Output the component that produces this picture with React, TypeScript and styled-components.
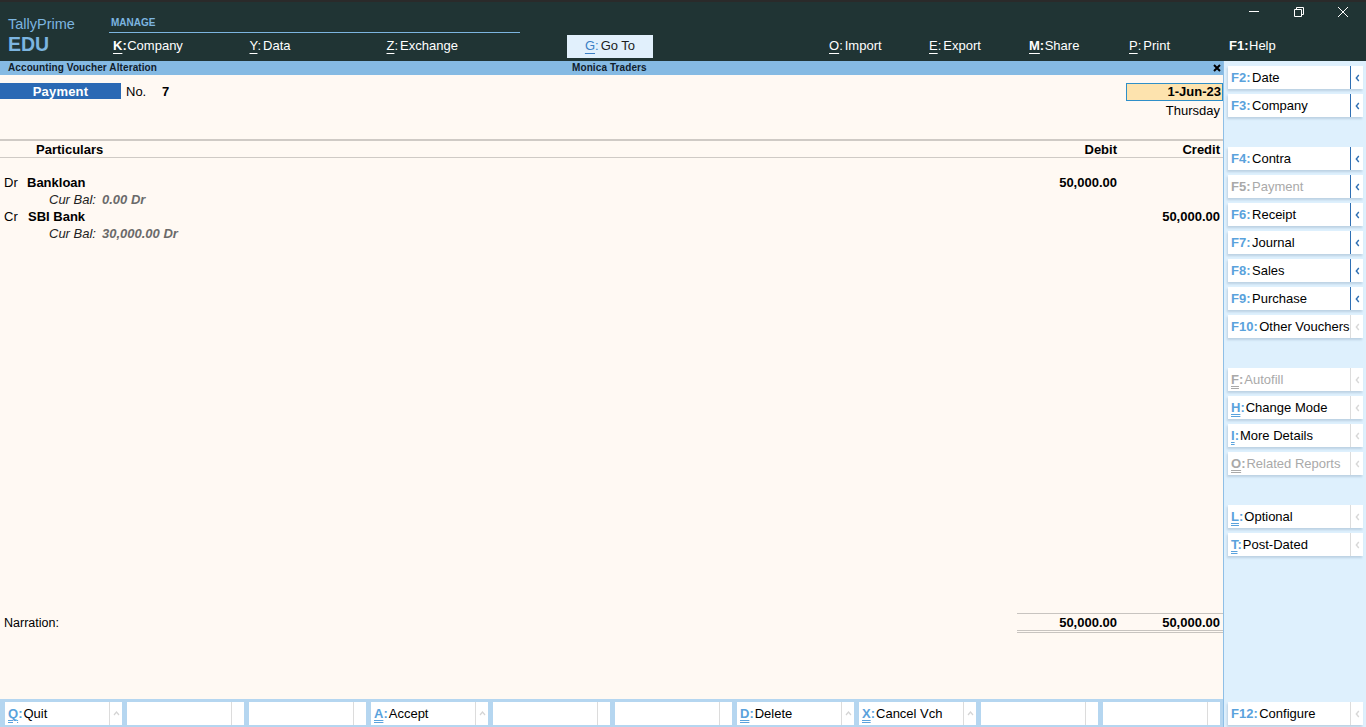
import React from 'react'
import styled, { createGlobalStyle } from 'styled-components'

const GlobalStyle = createGlobalStyle`
  html, body {
    margin: 0;
    padding: 0;
    height: 100%;
    overflow: hidden;
  }
  body {
    font-family: "Liberation Sans", Arial, sans-serif;
    font-size: 13px;
    color: #000;
  }
  #root {
    height: 100%;
  }
`

const topMenu = [
  { k: 'K', label: 'Company', width: 136.5, bold: true },
  { k: 'Y', label: 'Data', width: 137 },
  { k: 'Z', label: 'Exchange', width: 181 },
]

const rightMenu = [
  { k: 'O', label: 'Import' },
  { k: 'E', label: 'Export' },
  { k: 'M', label: 'Share', bold: true },
  { k: 'P', label: 'Print' },
]

type SideItem = { k: string; label: string; fn?: boolean; disabled?: boolean; active?: boolean }

const sideGroups: SideItem[][] = [
  [
    { k: 'F2', label: 'Date', fn: true, active: true },
    { k: 'F3', label: 'Company', fn: true, active: true },
  ],
  [
    { k: 'F4', label: 'Contra', fn: true, active: true },
    { k: 'F5', label: 'Payment', fn: true, active: true, disabled: true },
    { k: 'F6', label: 'Receipt', fn: true, active: true },
    { k: 'F7', label: 'Journal', fn: true, active: true },
    { k: 'F8', label: 'Sales', fn: true, active: true },
    { k: 'F9', label: 'Purchase', fn: true, active: true },
    { k: 'F10', label: 'Other Vouchers', fn: true },
  ],
  [
    { k: 'F', label: 'Autofill', disabled: true },
    { k: 'H', label: 'Change Mode' },
    { k: 'I', label: 'More Details' },
    { k: 'O', label: 'Related Reports', disabled: true },
  ],
  [
    { k: 'L', label: 'Optional' },
    { k: 'T', label: 'Post-Dated' },
  ],
]

const bottomItems = [
  { k: 'Q', label: 'Quit' },
  {},
  {},
  { k: 'A', label: 'Accept' },
  {},
  {},
  { k: 'D', label: 'Delete' },
  { k: 'X', label: 'Cancel Vch' },
  {},
  {},
]

const App: React.FC = () => {
  return (
    <Page>
      <GlobalStyle />
      <Header>
        <Brand>
          <BrandName>TallyPrime</BrandName>
          <BrandEdition>EDU</BrandEdition>
        </Brand>
        <ManageBlock>
          <ManageLabel>MANAGE</ManageLabel>
          <ManageMenu>
            {topMenu.map((m) => (
              <MenuItem key={m.k} $width={m.width}>
                <MenuKey $bold={m.bold}>{m.k}</MenuKey>
                <MenuColon $bold={m.bold}>:</MenuColon>
                {m.label}
              </MenuItem>
            ))}
          </ManageMenu>
        </ManageBlock>
        <GoTo>
          <GoToKey>G</GoToKey>
          <GoToColon>:</GoToColon>Go To
        </GoTo>
        <RightMenu>
          {rightMenu.map((m) => (
            <RightItem key={m.k}>
              <MenuKey $bold={m.bold}>{m.k}</MenuKey>
              <MenuColon $bold={m.bold}>:</MenuColon>
              {m.label}
            </RightItem>
          ))}
          <RightItem>
            <MenuColon $bold>F1:</MenuColon>Help
          </RightItem>
        </RightMenu>
        <WindowControls>
          <svg width="12" height="12" viewBox="0 0 12 12">
            <path d="M1 5.5h10" stroke="#fff" strokeWidth="1" fill="none" />
          </svg>
          <svg width="12" height="12" viewBox="0 0 12 12">
            <path d="M1.5 3.5h7v7h-7zM3.5 3.5v-2h7v7h-2" stroke="#fff" strokeWidth="1" fill="none" />
          </svg>
          <svg width="12" height="12" viewBox="0 0 12 12">
            <path d="M1 1l10 10M11 1L1 11" stroke="#fff" strokeWidth="1" fill="none" />
          </svg>
        </WindowControls>
      </Header>
      <Body>
        <Work>
          <TitleBar>
            <div>Accounting Voucher Alteration</div>
            <div>Monica Traders</div>
            <TitleClose>
              <svg width="8" height="8" viewBox="0 0 8 8">
                <path d="M1 1l6 6M7 1L1 7" stroke="#000" strokeWidth="2" fill="none" />
              </svg>
            </TitleClose>
          </TitleBar>
          <Voucher>
            <VoucherHead>
              <VoucherType>Payment</VoucherType>
              <VoucherNoLabel>No.</VoucherNoLabel>
              <VoucherNo>7</VoucherNo>
              <DateBlock>
                <DateBox>1-Jun-23</DateBox>
                <DayName>Thursday</DayName>
              </DateBlock>
            </VoucherHead>
            <ColumnHead>
              <ParticularsHead>Particulars</ParticularsHead>
              <AmountHead>Debit</AmountHead>
              <AmountHead>Credit</AmountHead>
            </ColumnHead>
            <Entries>
              <EntryRow>
                <EntryName>
                  <DrCr>Dr</DrCr>
                  <Ledger>Bankloan</Ledger>
                </EntryName>
                <Amount>50,000.00</Amount>
                <Amount />
              </EntryRow>
              <BalanceRow>
                <BalanceLabel>Cur Bal:</BalanceLabel>
                <BalanceValue>0.00 Dr</BalanceValue>
              </BalanceRow>
              <EntryRow>
                <EntryName>
                  <DrCr>Cr</DrCr>
                  <Ledger $shift>SBI Bank</Ledger>
                </EntryName>
                <Amount />
                <Amount>50,000.00</Amount>
              </EntryRow>
              <BalanceRow>
                <BalanceLabel>Cur Bal:</BalanceLabel>
                <BalanceValue>30,000.00 Dr</BalanceValue>
              </BalanceRow>
            </Entries>
            <TotalsRow>
              <Narration>Narration:</Narration>
              <Totals>
                <Amount>50,000.00</Amount>
                <Amount>50,000.00</Amount>
              </Totals>
            </TotalsRow>
          </Voucher>
          <BottomBar>
            {bottomItems.map((b, i) => (
              <BottomButton key={i}>
                <BottomLabel>
                  {b.k && (
                    <>
                      <HotKey>{b.k}</HotKey>
                      <HotColon>:</HotColon>
                      {b.label}
                    </>
                  )}
                </BottomLabel>
                <BottomArrow>
                  {b.k && (
                    <svg width="7" height="5" viewBox="0 0 7 5">
                      <path d="M1 4l2.5-3L6 4" stroke="#d4d4d4" strokeWidth="1.2" fill="none" />
                    </svg>
                  )}
                </BottomArrow>
              </BottomButton>
            ))}
          </BottomBar>
        </Work>
        <Side>
          <SideTop>
            {sideGroups.map((group, i) => (
              <SideGroup key={i}>
                {group.map((item) => (
                  <SideButton key={item.k + item.label} $disabled={item.disabled}>
                    <SideLabel>
                      {item.fn ? (
                        <FnKey $disabled={item.disabled}>{item.k}:</FnKey>
                      ) : (
                        <>
                          <HotKey $disabled={item.disabled}>{item.k}</HotKey>
                          <HotColon $disabled={item.disabled}>:</HotColon>
                        </>
                      )}
                      {item.label}
                    </SideLabel>
                    <SideArrow $active={item.active}>
                      <svg width="5" height="8" viewBox="0 0 5 8">
                        <path
                          d="M3.8 1L1.3 4l2.5 3"
                          stroke={item.active ? '#2f6fb3' : '#d8d8d8'}
                          strokeWidth="1.4"
                          fill="none"
                        />
                      </svg>
                    </SideArrow>
                  </SideButton>
                ))}
              </SideGroup>
            ))}
          </SideTop>
          <SideButton>
            <SideLabel>
              <FnKey>F12:</FnKey>Configure
            </SideLabel>
            <SideArrow>
              <svg width="5" height="8" viewBox="0 0 5 8">
                <path d="M3.8 1L1.3 4l2.5 3" stroke="#d8d8d8" strokeWidth="1.4" fill="none" />
              </svg>
            </SideArrow>
          </SideButton>
        </Side>
      </Body>
    </Page>
  )
}

const Page = styled.div`
  width: 1366px;
  height: 727px;
  display: flex;
  flex-direction: column;
  overflow: hidden;
`

const Header = styled.header`
  position: relative;
  height: 59px;
  flex: none;
  display: flex;
  align-items: flex-start;
  background: #203434;
  border-top: 2px solid #2a2a2a;
  color: #fff;
`

const Brand = styled.div`
  width: 109px;
  flex: none;
  padding: 14px 0 0 8px;
  box-sizing: border-box;
  color: #7cb5e0;
`

const BrandName = styled.div`
  font-size: 14.5px;
  line-height: 16px;
`

const BrandEdition = styled.div`
  font-size: 19.5px;
  line-height: 24px;
  font-weight: bold;
`

const ManageBlock = styled.div`
  width: 411px;
  flex: none;
  padding-top: 15px;
`

const ManageLabel = styled.div`
  font-size: 10px;
  line-height: 12px;
  font-weight: bold;
  color: #7cb5e0;
  padding: 0 0 3px 2px;
  border-bottom: 1px solid #7cb5e0;
`

const ManageMenu = styled.div`
  display: flex;
  padding: 5px 0 0 4px;
`

const MenuItem = styled.div<{ $width: number }>`
  width: ${(p) => p.$width}px;
  flex: none;
  font-size: 13px;
  line-height: 15px;
  white-space: nowrap;
`

const MenuKey = styled.span<{ $bold?: boolean }>`
  font-weight: ${(p) => (p.$bold ? 'bold' : 'normal')};
  text-decoration: underline;
  text-underline-offset: 3px;
`

const MenuColon = styled.span<{ $bold?: boolean }>`
  font-weight: ${(p) => (p.$bold ? 'bold' : 'normal')};
  margin-right: ${(p) => (p.$bold ? '0.5px' : '2px')};
`

const GoTo = styled.div`
  width: 86px;
  height: 23px;
  flex: none;
  margin: 33px 0 0 47px;
  background: #e1f0fc;
  color: #1c1c1c;
  font-size: 13px;
  line-height: 22px;
  text-align: center;
  white-space: nowrap;
`

const GoToKey = styled.span`
  color: #3b7fc4;
  text-decoration: underline;
  text-underline-offset: 3px;
`

const GoToColon = styled.span`
  color: #3b7fc4;
  margin-right: 2px;
`

const RightMenu = styled.div`
  display: flex;
  margin: 36px 0 0 176px;
`

const RightItem = styled.div`
  width: 100px;
  flex: none;
  font-size: 13px;
  line-height: 15px;
  white-space: nowrap;
`

const WindowControls = styled.div`
  position: absolute;
  top: 4px;
  right: 17px;
  display: flex;
  gap: 32.5px;
`

const Body = styled.div`
  flex: 1;
  min-height: 0;
  display: flex;
`

const Work = styled.div`
  width: 1223px;
  flex: none;
  display: flex;
  flex-direction: column;
  background: #fff9f3;
`

const TitleBar = styled.div`
  height: 14px;
  flex: none;
  display: grid;
  grid-template-columns: 564px auto 1fr;
  align-items: center;
  padding: 0 2px 0 8px;
  background: #85bae3;
  font-size: 10px;
  letter-spacing: 0.1px;
  line-height: 14px;
  font-weight: bold;
  color: #10202c;
`

const TitleClose = styled.div`
  display: flex;
  justify-content: flex-end;
`

const Voucher = styled.div`
  flex: 1;
  min-height: 0;
  display: flex;
  flex-direction: column;
`

const VoucherHead = styled.div`
  height: 66px;
  flex: none;
  display: flex;
  align-items: flex-start;
  padding-top: 8px;
  box-sizing: border-box;
  border-bottom: 2px solid #cfcac5;
`

const VoucherType = styled.div`
  width: 121px;
  height: 16px;
  flex: none;
  background: #2b69b4;
  color: #fff;
  font-weight: bold;
  font-size: 13px;
  letter-spacing: 0.2px;
  line-height: 17px;
  text-align: center;
`

const VoucherNoLabel = styled.div`
  margin-left: 5px;
  width: 36px;
  font-size: 13px;
  line-height: 17px;
`

const VoucherNo = styled.div`
  font-size: 13px;
  line-height: 17px;
  font-weight: bold;
`

const DateBlock = styled.div`
  margin-left: auto;
  width: 97px;
  flex: none;
`

const DateBox = styled.div`
  height: 18px;
  box-sizing: border-box;
  background: #fde3ae;
  border: 1px solid #2f8fc8;
  padding-right: 1px;
  font-size: 13px;
  line-height: 16px;
  font-weight: bold;
  text-align: right;
`

const DayName = styled.div`
  padding: 2px 3px 0 0;
  font-size: 13px;
  line-height: 15px;
  text-align: right;
`

const amountColumns = `
  display: grid;
  grid-template-columns: 1fr 103px 103px;
  padding-right: 3px;
`

const ColumnHead = styled.div`
  ${amountColumns}
  height: 17px;
  box-sizing: border-box;
  flex: none;
  border-bottom: 1px solid #cfcac5;
  font-weight: bold;
  font-size: 13px;
  line-height: 17px;
`

const ParticularsHead = styled.div`
  padding-left: 36px;
`

const AmountHead = styled.div`
  text-align: right;
`

const Entries = styled.div`
  flex: 1;
  min-height: 0;
  padding-top: 16px;
`

const EntryRow = styled.div`
  ${amountColumns}
  height: 17px;
  font-size: 13px;
  line-height: 17px;
`

const EntryName = styled.div`
  display: flex;
  padding-left: 4px;
`

const DrCr = styled.span`
  width: 23px;
  flex: none;
`

const Ledger = styled.span<{ $shift?: boolean }>`
  font-weight: bold;
  padding-left: ${(p) => (p.$shift ? '1px' : '0')};
`

const Amount = styled.div`
  font-weight: bold;
  font-size: 13px;
  line-height: 17px;
  text-align: right;
`

const BalanceRow = styled.div`
  height: 17px;
  display: flex;
  padding-left: 49px;
  font-size: 13px;
  line-height: 17px;
  font-style: italic;
`

const BalanceLabel = styled.span`
  width: 53px;
  flex: none;
  color: #222;
`

const BalanceValue = styled.span`
  color: #6a6a6a;
  font-weight: bold;
`

const TotalsRow = styled.div`
  height: 86px;
  flex: none;
  display: flex;
  align-items: flex-start;
  justify-content: space-between;
`

const Narration = styled.div`
  padding: 2px 0 0 4px;
  font-size: 12.5px;
  line-height: 17px;
`

const Totals = styled.div`
  width: 206px;
  height: 20px;
  box-sizing: border-box;
  display: grid;
  grid-template-columns: 100px 103px;
  border-top: 1px solid #c8c4c0;
  border-bottom: 3px double #c8c4c0;
`

const BottomBar = styled.div`
  height: 28px;
  flex: none;
  box-sizing: border-box;
  display: flex;
  gap: 5px;
  padding: 3px 5px 2px;
  background: #b5d6f0;
`

const BottomButton = styled.div`
  width: 117px;
  flex: none;
  display: flex;
  background: #fff;
`

const BottomLabel = styled.div`
  flex: 1;
  padding-left: 3px;
  font-size: 13px;
  line-height: 24px;
  white-space: nowrap;
`

const BottomArrow = styled.div`
  width: 12px;
  flex: none;
  display: flex;
  align-items: center;
  justify-content: center;
  border-left: 1px solid #dcdcdc;
`

const HotKey = styled.span<{ $disabled?: boolean }>`
  font-weight: bold;
  color: ${(p) => (p.$disabled ? '#a9a9a9' : '#5aa2dc')};
  text-decoration: underline double;
  text-underline-offset: 2px;
`

const HotColon = styled.span<{ $disabled?: boolean }>`
  font-weight: bold;
  color: ${(p) => (p.$disabled ? '#a9a9a9' : '#5aa2dc')};
  margin-right: 1px;
`

const Side = styled.aside`
  flex: 1;
  min-width: 0;
  box-sizing: border-box;
  display: flex;
  flex-direction: column;
  justify-content: space-between;
  padding: 5px 3px 2px 4px;
  background: #def0fd;
  border-left: 1px solid #8fbfe6;
`

const SideTop = styled.div`
  display: flex;
  flex-direction: column;
  gap: 30px;
`

const SideGroup = styled.div`
  display: flex;
  flex-direction: column;
  gap: 5px;
`

const SideButton = styled.div<{ $disabled?: boolean }>`
  height: 23px;
  display: flex;
  background: #fff;
  box-shadow: -1px 2px 2px rgba(90, 120, 150, 0.25);
  color: ${(p) => (p.$disabled ? '#a9a9a9' : '#000')};
`

const SideLabel = styled.div`
  flex: 1;
  min-width: 0;
  padding-left: 3px;
  font-size: 13px;
  line-height: 23px;
  white-space: nowrap;
`

const FnKey = styled.span<{ $disabled?: boolean }>`
  font-weight: bold;
  color: ${(p) => (p.$disabled ? '#a9a9a9' : '#5aa2dc')};
  margin-right: 1.5px;
`

const SideArrow = styled.div<{ $active?: boolean }>`
  width: 12px;
  flex: none;
  display: flex;
  align-items: center;
  justify-content: center;
  border-left: 1px solid ${(p) => (p.$active ? '#2f6fb3' : '#dcdcdc')};
`

export default App
